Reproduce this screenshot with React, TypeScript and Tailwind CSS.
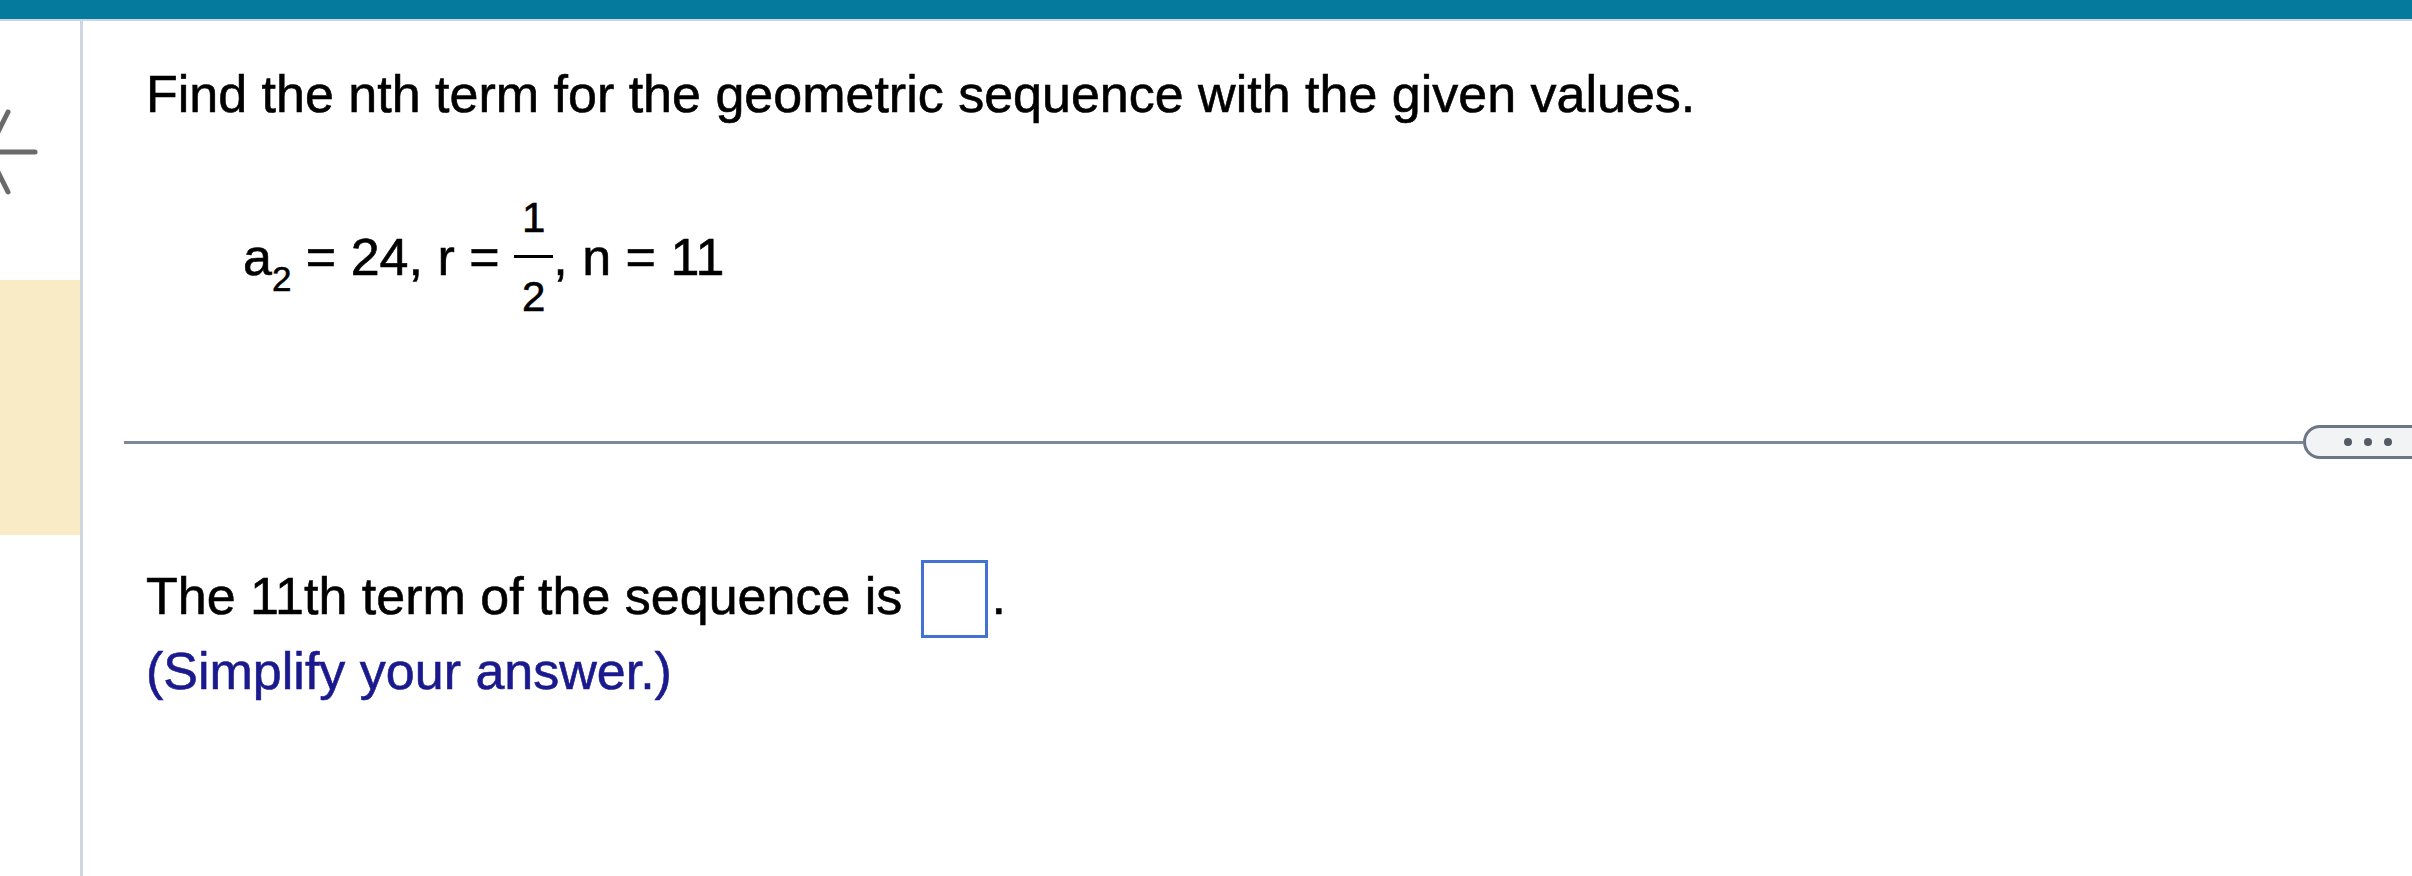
import React from 'react'

function BackArrow() {
  return (
    <svg width="80" height="100" viewBox="0 102 80 100" className="block">
      <g stroke="#6a6a6a" strokeWidth="5" strokeLinecap="round" fill="none">
        <line x1="-30" y1="152" x2="35" y2="152" />
        <line x1="-12" y1="152" x2="8" y2="112" />
        <line x1="-12" y1="152" x2="8" y2="192" />
      </g>
    </svg>
  )
}

function Fraction({ num, den }: { num: string; den: string }) {
  return (
    <span className="inline-block align-[-36px] text-[42px] leading-[42px] text-center">
      <span className="block h-[42px] px-[8px]">{num}</span>
      <span className="block h-[3px] mt-[16px] bg-black" />
      <span className="block h-[42px] mt-[18px] px-[8px]">{den}</span>
    </span>
  )
}

export default function App() {
  return (
    <div
      className="w-[2412px] h-[876px] bg-white overflow-hidden flex flex-col text-black [-webkit-text-stroke:0.6px]"
      style={{ fontFamily: '"Liberation Sans", Arial, sans-serif' }}
    >
      {/* top bar */}
      <div className="h-[19px] shrink-0 bg-[#067a9d]" />
      <div className="h-[2px] shrink-0 bg-[#c8d8e4]" />

      <div className="flex flex-1 min-h-0">
        {/* left rail */}
        <div className="w-[80px] shrink-0 flex flex-col">
          <div className="mt-[81px]">
            <BackArrow />
          </div>
          <div className="mt-[78px] h-[255px] bg-[#f9ebc5]" />
        </div>
        <div className="w-[3px] shrink-0 bg-[#d0d6e1]" />

        {/* question */}
        <div className="flex-1 min-w-0 pl-[41px] pt-[43px] text-[52px]">
          <div className="pl-[22px] leading-[60px]">
            Find the nth term for the geometric sequence with the given values.
          </div>

          <div className="pl-[119px] mt-[73px] leading-[60px] whitespace-nowrap">
            a<span className="text-[35px] leading-none align-[-16px]">2</span> = 24, r ={' '}
            <Fraction num="1" den="2" />, n = 11
          </div>

          {/* divider with more button */}
          <div className="mt-[107px] -mr-[21px] flex items-center h-[34px]">
            <div className="flex-1 h-[3px] bg-[#7e889a]" />
            <div className="w-[130px] h-[34px] shrink-0 rounded-full border-[3px] border-[#6d7687] bg-[#f1f3f5] flex items-center pl-[38px] gap-[12px]">
              <span className="w-[8px] h-[8px] rounded-full bg-[#555b66]" />
              <span className="w-[8px] h-[8px] rounded-full bg-[#555b66]" />
              <span className="w-[8px] h-[8px] rounded-full bg-[#555b66]" />
            </div>
          </div>

          <div className="pl-[22px] mt-[100px]">
            <div className="leading-[75px] whitespace-nowrap">
              The 11th term of the sequence is
              <span className="inline-block align-[-24px] ml-[19px] mr-[3px] w-[67px] h-[78px] border-[3px] border-[#4472d2] bg-white" />
              .
            </div>
            <div className="leading-[66px] text-[#1a1a8e]">(Simplify your answer.)</div>
          </div>
        </div>
      </div>
    </div>
  )
}
